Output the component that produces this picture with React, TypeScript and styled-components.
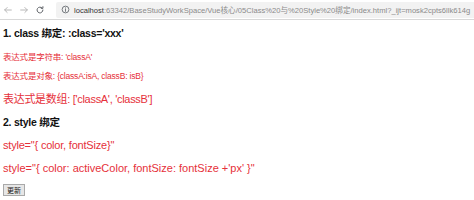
import styled, { createGlobalStyle } from "styled-components";

const GlobalStyle = createGlobalStyle`
  html, body {
    margin: 0;
    padding: 0;
    background: #fff;
    font-family: "Liberation Sans", "Noto Sans CJK SC", sans-serif;
  }
`;

const Page = styled.div`
  width: 474px;
  height: 200px;
  overflow: hidden;
  display: flex;
  flex-direction: column;
`;

const Toolbar = styled.div`
  height: 19px;
  display: flex;
  align-items: center;
  gap: 6px;
  padding: 0 0 0 3px;
  border-bottom: 1px solid #d8d8d8;
  background: #fff;
`;

const NavBtn = styled.span<{ dim?: boolean }>`
  width: 10px;
  display: flex;
  justify-content: center;
  color: ${(p) => (p.dim ? "#b8b8b8" : "#5f6368")};
`;

const Omnibox = styled.div`
  flex: 1;
  margin-left: 5px;
  height: 16px;
  display: flex;
  align-items: center;
  gap: 4px;
  padding-left: 5px;
  background: #f2f2f2;
  border-radius: 2px 0 0 2px;
  font-family: "Liberation Sans", "Noto Sans CJK SC", sans-serif;
  font-size: 7.6px;
  color: #8a8a8a;
  white-space: nowrap;
  overflow: hidden;
  b {
    font-weight: 400;
    color: #333;
  }
`;

const Content = styled.div`
  padding: 0 3px;
  display: flex;
  flex-direction: column;
`;

const Heading = styled.h3<{ gap: number }>`
  margin: ${(p) => p.gap}px 0 0;
  font-size: 10.5px;
  letter-spacing: -0.25px;
  line-height: 14px;
  font-weight: 700;
  color: #111;
  white-space: nowrap;
`;

const Line = styled.p<{ size: number; gap: number; lh: number; track?: number }>`
  margin: ${(p) => p.gap}px 0 0;
  font-size: ${(p) => p.size}px;
  letter-spacing: ${(p) => p.track ?? 0}px;
  line-height: ${(p) => p.lh}px;
  color: #e6303a;
  white-space: nowrap;
`;

const UpdateButton = styled.button`
  align-self: flex-start;
  margin-top: 8px;
  padding: 0 3px;
  height: 12px;
  font-family: "Noto Sans CJK SC", sans-serif;
  font-size: 7px;
  line-height: 10px;
  color: #222;
  background: #e6e6e6;
  border: 1px solid #a9a9a9;
  border-radius: 0;
`;

const Icon = ({ d, size = 10 }: { d: string; size?: number }) => (
  <svg width={size} height={size} viewBox="0 0 24 24" fill="none" stroke="currentColor" strokeWidth="2.4" strokeLinecap="round" strokeLinejoin="round">
    <path d={d} />
  </svg>
);

export default function App() {
  return (
    <Page>
      <GlobalStyle />
      <Toolbar>
        <NavBtn dim>
          <Icon d="M20 12H4M10 6l-6 6 6 6" />
        </NavBtn>
        <NavBtn dim>
          <Icon d="M4 12h16M14 6l6 6-6 6" />
        </NavBtn>
        <NavBtn>
          <Icon d="M19 12a7 7 0 1 1-2.05-4.95M19 4v4h-4" />
        </NavBtn>
        <Omnibox>
          <svg width="9" height="9" viewBox="0 0 24 24" fill="none" stroke="#5f6368" strokeWidth="2.2">
            <circle cx="12" cy="12" r="9" />
            <path d="M12 11v6M12 7.5v.5" strokeLinecap="round" />
          </svg>
          <span>
            <b>localhost</b>:63342/BaseStudyWorkSpace/Vue核心/05Class%20与%20Style%20绑定/index.html?_ijt=mosk2cpts6llk614g
          </span>
        </Omnibox>
      </Toolbar>
      <Content>
        <Heading gap={6}>1. class 绑定: :class='xxx'</Heading>
        <Line size={8.5} lh={12} gap={11} track={-0.2}>表达式是字符串: 'classA'</Line>
        <Line size={8.5} lh={12} gap={7} track={-0.2}>表达式是对象: {"{classA:isA, classB: isB}"}</Line>
        <Line size={11} lh={15} gap={10} track={-0.3}>表达式是数组: ['classA', 'classB']</Line>
        <Heading gap={8}>2. style 绑定</Heading>
        <Line size={11} lh={15} gap={9} track={-0.2}>style="{"{ color, fontSize}"}"</Line>
        <Line size={11} lh={15} gap={8}>style="{"{ color: activeColor, fontSize: fontSize +'px' }"}"</Line>
        <UpdateButton>更新</UpdateButton>
      </Content>
    </Page>
  );
}
